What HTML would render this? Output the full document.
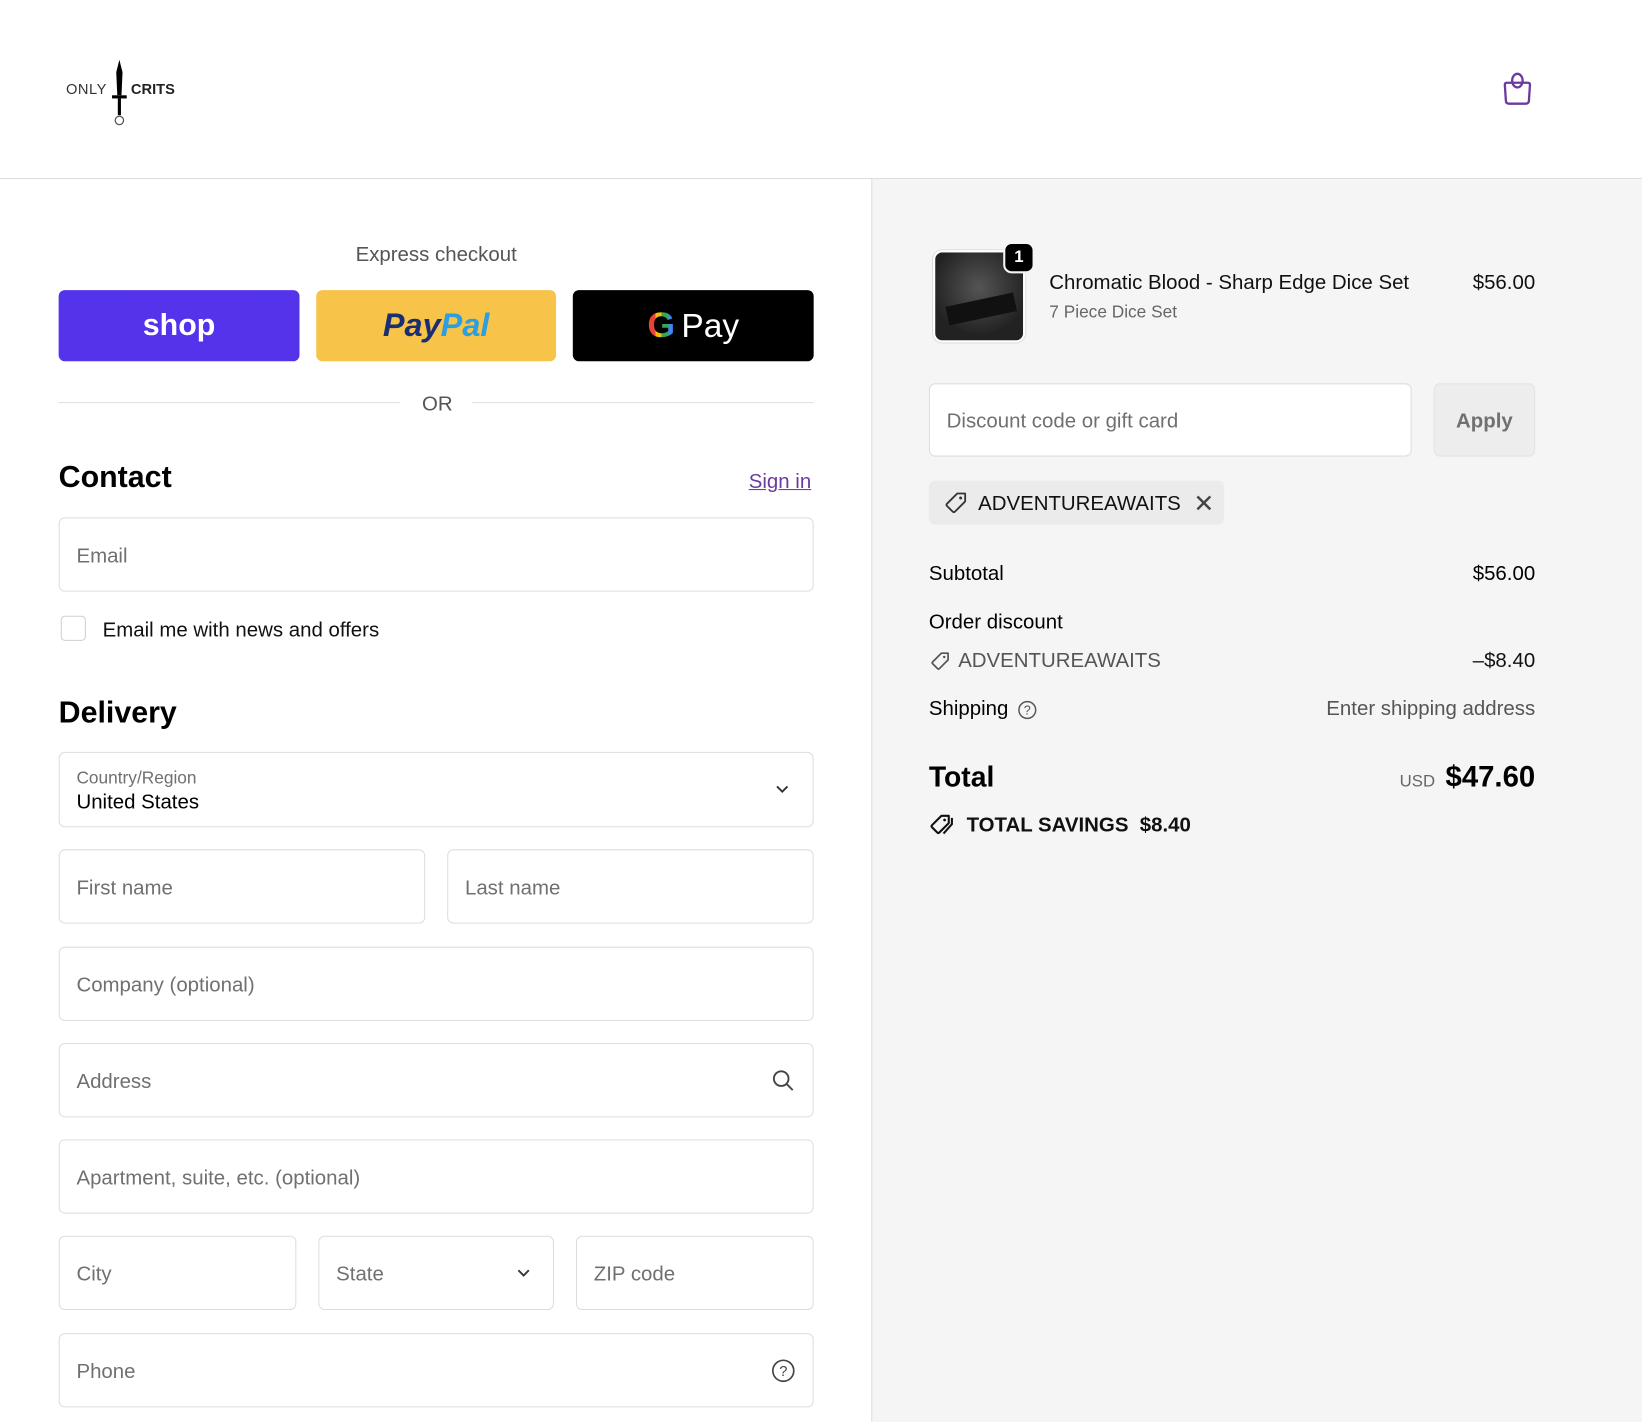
<!DOCTYPE html>
<html><head><meta charset="utf-8"><style>
*{box-sizing:border-box;margin:0;padding:0}
html,body{width:1642px;height:1422px;overflow:hidden;background:#fff}
body{font-family:"Liberation Sans",sans-serif;color:#000}
#w{position:absolute;left:0;top:0;width:1568px;height:1358px;transform:scale(1.0472);transform-origin:0 0}
.a{position:absolute}
.hdr{left:0;top:0;width:1568px;height:171px;border-bottom:1px solid #dedede;background:#fff}
.right{left:832px;top:171px;width:736px;height:1187px;background:#f5f5f5;border-left:1px solid #dedede}
.inp{position:absolute;background:#fff;border:1px solid #dedede;border-radius:6px;font-size:19.5px;color:#707070;padding-left:16px;padding-top:3px;display:flex;align-items:center}
.btn{position:absolute;top:277px;height:68px;border-radius:6px;display:flex;align-items:center;justify-content:center}
.row{position:absolute;left:887px;width:579px;font-size:19.5px;display:flex;justify-content:space-between;align-items:center}
</style></head><body><div id="w">
<div class="a hdr"></div>
<div class="a" style="left:63px;top:77px;font-size:14px;color:#333;letter-spacing:.5px">ONLY</div>
<div class="a" style="left:125px;top:77px;font-size:14px;font-weight:bold;color:#222">CRITS</div>
<svg class="a" style="left:104px;top:55px" width="20" height="68" viewBox="0 0 20 68"><path d="M10 2 L13 14 L12 36 L8 36 L7 14Z" fill="#000"/><rect x="3" y="36" width="14" height="3" fill="#000"/><rect x="8.5" y="39" width="3" height="16" fill="#000"/><circle cx="10" cy="60" r="4" fill="none" stroke="#555" stroke-width="1.2"/></svg>
<svg class="a" style="left:1434px;top:68px" width="30" height="34" viewBox="0 0 30 34"><path d="M5 11 H25 Q27 11 27 13 L26 28 Q26 31 23 31 H7 Q4 31 4 28 L3 13 Q3 11 5 11Z" fill="none" stroke="#6b3aa0" stroke-width="2.2" stroke-linejoin="round"/><ellipse cx="15" cy="9" rx="5" ry="6.5" fill="none" stroke="#6b3aa0" stroke-width="2.2"/></svg>

<div class="a right"></div>

<div class="a" style="left:56px;width:721px;top:232px;text-align:center;font-size:19.5px;color:#555">Express checkout</div>
<div class="btn" style="left:56px;width:230px;background:#5433eb;color:#fff;font-weight:bold;font-size:29px">shop</div>
<div class="btn" style="left:302px;width:229px;background:#f7c349;font-weight:bold;font-style:italic;font-size:31px"><span style="color:#1a2e74">Pay</span><span style="color:#2b9fe0">Pal</span></div>
<div class="btn" style="left:547px;width:230px;background:#000;color:#fff;font-size:32px"><span style="font-weight:bold;font-size:34px;background:linear-gradient(90deg,#ea4335 0 30%,#fbbc05 30% 50%,#34a853 50% 75%,#4285f4 75%);-webkit-background-clip:text;color:transparent;margin-right:6px">G</span>Pay</div>
<div class="a" style="left:56px;top:384px;width:326px;border-top:1px solid #dedede"></div>
<div class="a" style="left:451px;top:384px;width:326px;border-top:1px solid #dedede"></div>
<div class="a" style="left:403px;top:375px;font-size:19.5px;color:#555">OR</div>

<div class="a" style="left:56px;top:440px;font-size:29px;font-weight:bold">Contact</div>
<div class="a" style="left:715px;top:449px;font-size:19.5px;color:#6b3aa0;text-decoration:underline">Sign in</div>
<div class="inp" style="left:56px;top:494px;width:721px;height:71px">Email</div>
<div class="a" style="left:58px;top:588px;width:24px;height:24px;border:1px solid #d0d0d0;border-radius:4px;background:#fff"></div>
<div class="a" style="left:98px;top:591px;font-size:19.5px;color:#111">Email me with news and offers</div>

<div class="a" style="left:56px;top:665px;font-size:29px;font-weight:bold">Delivery</div>
<div class="inp" style="left:56px;top:718px;width:721px;height:72px;flex-direction:column;align-items:flex-start;justify-content:center">
<div style="font-size:16.5px;color:#707070">Country/Region</div><div style="font-size:19.5px;color:#000;margin-top:2px">United States</div></div>
<svg class="a" style="left:740px;top:749px" width="14" height="10"><path d="M2 2 L7 7 L12 2" fill="none" stroke="#333" stroke-width="1.8"/></svg>
<div class="inp" style="left:56px;top:811px;width:350px;height:71px">First name</div>
<div class="inp" style="left:427px;top:811px;width:350px;height:71px">Last name</div>
<div class="inp" style="left:56px;top:904px;width:721px;height:71px">Company (optional)</div>
<div class="inp" style="left:56px;top:996px;width:721px;height:71px">Address</div>
<svg class="a" style="left:737px;top:1021px" width="22" height="22"><circle cx="9" cy="9" r="7" fill="none" stroke="#444" stroke-width="1.8"/><path d="M14 14 L20 20" stroke="#444" stroke-width="1.8"/></svg>
<div class="inp" style="left:56px;top:1088px;width:721px;height:71px">Apartment, suite, etc. (optional)</div>
<div class="inp" style="left:56px;top:1180px;width:227px;height:71px">City</div>
<div class="inp" style="left:304px;top:1180px;width:225px;height:71px">State</div>
<svg class="a" style="left:493px;top:1211px" width="14" height="10"><path d="M2 2 L7 7 L12 2" fill="none" stroke="#333" stroke-width="1.8"/></svg>
<div class="inp" style="left:550px;top:1180px;width:227px;height:71px">ZIP code</div>
<div class="inp" style="left:56px;top:1273px;width:721px;height:71px">Phone</div>
<svg class="a" style="left:736px;top:1297px" width="24" height="24"><circle cx="12" cy="12" r="10" fill="none" stroke="#444" stroke-width="1.6"/><text x="12" y="17" font-size="14" text-anchor="middle" font-family="Liberation Sans" fill="#444">?</text></svg>

<div class="a" style="left:891px;top:239px;width:88px;height:88px;border-radius:9px;border:2px solid #fff;background:radial-gradient(circle at 50% 40%,#555,#222 70%);box-shadow:0 0 0 1px #ddd"></div>
<div class="a" style="left:904px;top:286px;width:66px;height:18px;background:#111;transform:rotate(-12deg)"></div>
<div class="a" style="left:958px;top:231px;width:30px;height:30px;border-radius:8px;background:#000;color:#fff;font-size:16px;font-weight:bold;display:flex;align-items:center;justify-content:center;border:2px solid #f5f5f5">1</div>
<div class="a" style="left:1002px;top:259px;font-size:19.5px;color:#111">Chromatic Blood - Sharp Edge Dice Set</div>
<div class="a" style="left:1002px;top:289px;font-size:16.5px;color:#666">7 Piece Dice Set</div>
<div class="a" style="left:1300px;width:166px;text-align:right;top:259px;font-size:19.5px;color:#111">$56.00</div>

<div class="inp" style="left:887px;top:366px;width:461px;height:70px">Discount code or gift card</div>
<div class="a" style="left:1369px;top:366px;width:97px;height:70px;border-radius:6px;background:#ededed;border:1px solid #e3e3e3;color:#707070;font-weight:bold;font-size:19.5px;display:flex;align-items:center;justify-content:center;padding-top:3px">Apply</div>
<div class="a" style="left:887px;top:459px;width:282px;height:42px;border-radius:6px;background:#ebebeb;display:flex;align-items:center;padding-left:13px;padding-top:2px;font-size:19.5px;color:#111">
<svg width="26" height="26" viewBox="0 0 24 24" style="margin-right:8px"><path d="M13 3 H20 V10 L11 19 Q10 20 9 19 L4 14 Q3 13 4 12Z" fill="none" stroke="#333" stroke-width="1.6" stroke-linejoin="round"/><circle cx="16" cy="7" r="1.3" fill="#333"/></svg>ADVENTUREAWAITS<span style="margin-left:12px;font-size:24px;color:#444">✕</span></div>

<div class="row" style="top:537px"><span>Subtotal</span><span>$56.00</span></div>
<div class="row" style="top:583px"><span>Order discount</span></div>
<div class="row" style="top:620px;color:#555"><span style="display:flex;align-items:center"><svg width="22" height="22" viewBox="0 0 24 24" style="margin-right:6px"><path d="M13 3 H20 V10 L11 19 Q10 20 9 19 L4 14 Q3 13 4 12Z" fill="none" stroke="#555" stroke-width="1.8" stroke-linejoin="round"/><circle cx="16" cy="7" r="1.3" fill="#555"/></svg>ADVENTUREAWAITS</span><span style="color:#111">–$8.40</span></div>
<div class="row" style="top:666px"><span style="display:flex;align-items:center">Shipping<svg width="20" height="20" style="margin-left:8px"><circle cx="10" cy="10" r="8" fill="none" stroke="#555" stroke-width="1.4"/><text x="10" y="14.5" font-size="12" text-anchor="middle" font-family="Liberation Sans" fill="#555">?</text></svg></span><span style="color:#555">Enter shipping address</span></div>
<div class="row" style="top:726px"><span style="font-size:27px;font-weight:bold">Total</span><span><span style="font-size:16px;color:#666;margin-right:10px">USD</span><span style="font-size:28px;font-weight:bold">$47.60</span></span></div>
<div class="a" style="left:887px;top:775px;display:flex;align-items:center;font-size:19.5px;font-weight:bold;color:#111">
<svg width="28" height="26" viewBox="0 0 28 24" style="margin-right:8px"><path d="M12 3 H19 V10 L10 19 Q9 20 8 19 L3 14 Q2 13 3 12Z" fill="none" stroke="#111" stroke-width="2" stroke-linejoin="round"/><path d="M22 5 V11 L14 20" fill="none" stroke="#111" stroke-width="2"/><circle cx="15" cy="7" r="1.3" fill="#111"/></svg>TOTAL SAVINGS&nbsp;&nbsp;$8.40</div>
</div></body></html>
